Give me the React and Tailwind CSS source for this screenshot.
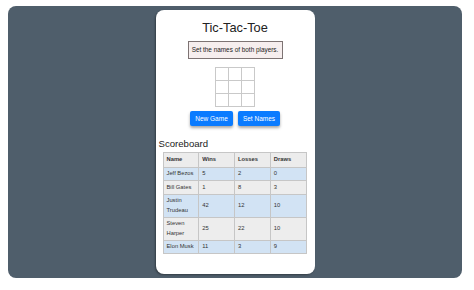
const players = [
    { name: "Jeff Bezos", wins: 5, losses: 2, draws: 0 },
    { name: "Bill Gates", wins: 1, losses: 8, draws: 3 },
    { name: "Justin Trudeau", wins: 42, losses: 12, draws: 10 },
    { name: "Steven Harper", wins: 25, losses: 22, draws: 10 },
    { name: "Elon Musk", wins: 11, losses: 3, draws: 9 },
];

function Board() {
    return (
        <div className="mt-[8px] grid grid-cols-[repeat(3,12px)] gap-px bg-[#c9c9c9] p-px">
            {Array.from({ length: 9 }).map((_, i) => (
                <div key={i} className="h-[12px] bg-white" />
            ))}
        </div>
    );
}

function Scoreboard() {
    return (
        <table className="mt-[3px] ml-[4px] w-[144px] table-fixed border-collapse text-[5.8px] leading-[9.5px] text-[#333]">
            <thead>
                <tr className="bg-[#ececec]">
                    <th className="border border-[#c6c6c6] px-[3px] py-[2px] text-left font-bold">Name</th>
                    <th className="border border-[#c6c6c6] px-[3px] py-[2px] text-left font-bold">Wins</th>
                    <th className="border border-[#c6c6c6] px-[3px] py-[2px] text-left font-bold">Losses</th>
                    <th className="border border-[#c6c6c6] px-[3px] py-[2px] text-left font-bold">Draws</th>
                </tr>
            </thead>
            <tbody>
                {players.map((p, i) => (
                    <tr key={p.name} className={i % 2 === 0 ? "bg-[#d2e3f4]" : "bg-[#ededed]"}>
                        <td className="border border-[#c6c6c6] px-[3px] py-[1.5px]">{p.name}</td>
                        <td className="border border-[#c6c6c6] px-[3px] py-[1.5px]">{p.wins}</td>
                        <td className="border border-[#c6c6c6] px-[3px] py-[1.5px]">{p.losses}</td>
                        <td className="border border-[#c6c6c6] px-[3px] py-[1.5px]">{p.draws}</td>
                    </tr>
                ))}
            </tbody>
        </table>
    );
}

export default function App() {
    return (
        <div className="w-[474px] h-[290px] bg-white pl-[8px] pt-[6px] font-['Liberation_Sans',Arial,sans-serif]">
            <div className="w-[454px] h-[272px] rounded-[8px] bg-[#4f5e6b] pt-[4px] flex justify-center">
                <div className="w-[159px] h-[264px] rounded-[8px] bg-white shadow-[-1px_1px_2px_rgba(0,0,0,0.35)] px-[3px] flex flex-col">
                    <div className="flex flex-col items-center">
                        <h1 className="mt-[10px] text-[12.8px] leading-[15px] text-[#222]">Tic-Tac-Toe</h1>
                        <div className="mt-[6px] w-[95px] h-[18px] flex items-center justify-center border border-[#7d7373] bg-[#f6eeee] text-[6.4px] text-[#222]">
                            Set the names of both players.
                        </div>
                        <Board />
                        <div className="mt-[4px] flex gap-[5px]">
                            <button className="w-[43px] h-[15px] rounded-[2px] bg-[#0a7bff] text-[6.5px] text-white shadow-[0_2px_3px_rgba(0,0,0,0.35)]">
                                New Game
                            </button>
                            <button className="w-[42px] h-[15px] rounded-[2px] bg-[#0a7bff] text-[6.5px] text-white shadow-[0_2px_3px_rgba(0,0,0,0.35)]">
                                Set Names
                            </button>
                        </div>
                    </div>
                    <h2 className="mt-[12px] text-[9.6px] leading-[11px] text-[#222]">Scoreboard</h2>
                    <Scoreboard />
                </div>
            </div>
        </div>
    );
}
